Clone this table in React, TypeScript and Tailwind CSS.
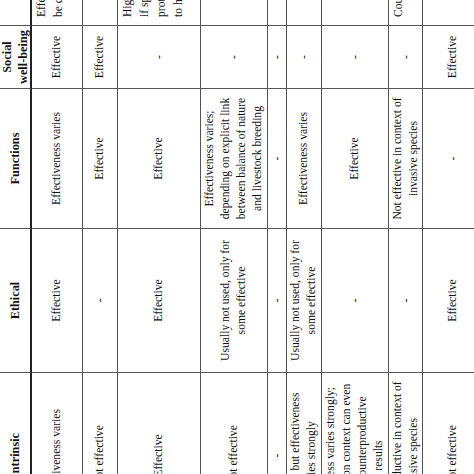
import React from 'react';

// Table is laid out upright, then turned a quarter turn counter-clockwise,
// which is how the page in the screenshot is printed.
const headers = ['Intrinsic', 'Ethical', 'Functions', 'Social\nwell-being', 'Relational'];

const rows: string[][] = [
    ['Effectiveness varies', 'Effective', 'Effectiveness varies', 'Effective', 'Effective, but\nbe controversial'],
    ['Not effective', '-', 'Effective', 'Effective', ''],
    ['Effective', 'Effective', 'Effective', '-', 'Highly effective\nif species are\nprotected, but\nto high costs'],
    [
        'Not effective',
        'Usually not used, only for\nsome effective',
        'Effectiveness varies;\ndepending on explicit link\nbetween balance of nature\nand livestock breeding',
        '-',
        '',
    ],
    ['-', '-', '-', '-', ''],
    ['Effective, but effectiveness\nvaries strongly', 'Usually not used, only for\nsome effective', 'Effectiveness varies', '-', ''],
    [
        'Effectiveness varies strongly;\ndepending on context can even\nlead to counterproductive\nresults',
        '-',
        'Effective',
        '-',
        '',
    ],
    ['Counterproductive in context of\ninvasive species', '-', 'Not effective in context of\ninvasive species', '-', 'Counterproductive'],
    ['Not effective', 'Effective', '-', 'Effective', ''],
];

const Cell: React.FC<{ text: string; last?: boolean }> = ({ text, last }) => (
    <div
        className={
            last
                ? 'flex items-start justify-start pl-[8px] pt-px text-left whitespace-pre-line leading-[17px] border-b border-[#555]'
                : 'flex items-center justify-center text-center whitespace-pre-line border-r border-b border-[#555]'
        }
    >
        {text}
    </div>
);

export default function App() {
    return (
        <div className="relative w-[474px] h-[474px] overflow-hidden bg-white">
            <div
                className="absolute left-0 top-[538px] origin-top-left -rotate-90 grid grid-cols-[166px_144px_140px_63px_160px] grid-rows-[32px_51px_35px_83px_67px_19px_35px_67px_34px_60px] text-[11.6px] leading-[16px] text-[#111]"
                style={{ fontFamily: '"Liberation Serif", "DejaVu Serif", serif' }}
            >
                {headers.map((h, i) => (
                    <div
                        key={h}
                        className={
                            i === 4
                                ? 'flex items-center justify-center text-center whitespace-pre-line font-bold text-[12.3px] border-b-2 border-[#222]'
                                : 'flex items-center justify-center text-center whitespace-pre-line font-bold text-[12.3px] border-r border-r-[#555] border-b-2 border-b-[#222]'
                        }
                    >
                        {h}
                    </div>
                ))}
                {rows.map((row, r) =>
                    row.map((c, i) => <Cell key={`${r}-${i}`} text={c} last={i === 4} />)
                )}
            </div>
        </div>
    );
}
